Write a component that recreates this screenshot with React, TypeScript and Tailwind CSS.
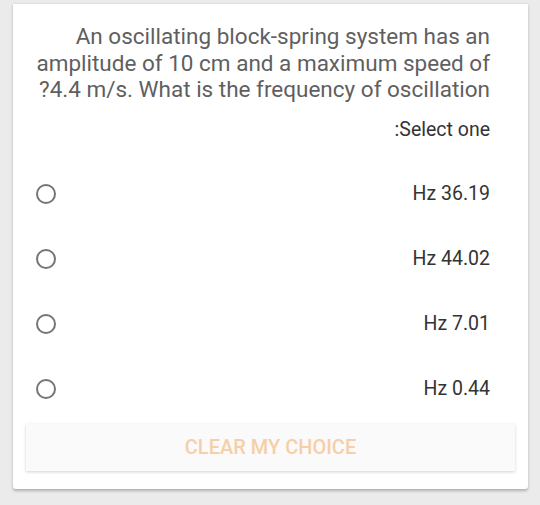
const options = ['Hz 36.19', 'Hz 44.02', 'Hz 7.01', 'Hz 0.44'];

export default function App() {
    return (
        <div
            className="w-[540px] h-[505px] bg-[#ebebeb] pt-[3px] pl-[13px] overflow-hidden"
            style={{ fontFamily: 'Roboto, "Noto Sans", sans-serif' }}
        >
            <div className="w-[515px] h-[486px] bg-white rounded-b-[3px] shadow-[0_2px_3px_rgba(0,0,0,0.25)] border-t border-[#e0e0e0]">
                {/* Question */}
                <div className="pr-[38px] pl-[20px] pt-[19px] text-right">
                    <p className="text-[22.5px] leading-[26.5px] text-[#5f5f5f] whitespace-nowrap">
                        An oscillating block-spring system has an
                        <br />
                        amplitude of 10 cm and a maximum speed of
                        <br />
                        ?4.4 m/s. What is the frequency of oscillation
                    </p>
                    <p className="mt-[15px] text-[19.5px] leading-[24px] text-[#333]">:Select one</p>
                </div>

                {/* Options */}
                <div className="mt-[20px] flex flex-col">
                    {options.map((opt) => (
                        <div key={opt} className="h-[65px] flex items-center justify-between pl-[23px] pr-[38px]">
                            <span className="w-[20px] h-[20px] rounded-full border-[2.5px] border-[#757575]" />
                            <span className="text-[19.5px] text-[#333]">{opt}</span>
                        </div>
                    ))}
                </div>

                {/* Clear button */}
                <div className="px-[13px] mt-[2px]">
                    <button className="w-full h-[47px] bg-[#fafafa] shadow-[0_1px_3px_rgba(0,0,0,0.18)] text-[20px] font-medium text-[#f6cfa8]">
                        CLEAR MY CHOICE
                    </button>
                </div>
            </div>
        </div>
    );
}
